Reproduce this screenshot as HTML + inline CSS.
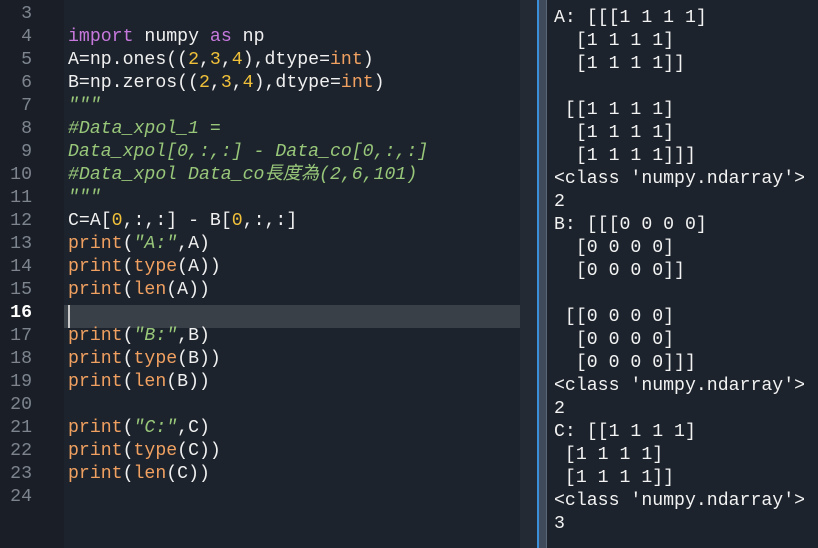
<!DOCTYPE html>
<html><head><meta charset="utf-8"><style>
html,body{margin:0;padding:0;width:818px;height:548px;overflow:hidden;background:#1c232c;}
.mono{font-family:"Liberation Mono","Noto Sans CJK TC",monospace;font-size:18.2px;line-height:23px;}
.mono div{white-space:pre;height:23px;}
#gut{position:absolute;left:0;top:0;width:64px;height:548px;background:#1a1f27;}
#gut div{text-align:right;width:32px;color:#7d848e;}
#code{position:absolute;left:64px;top:0;width:456px;height:548px;background:#1c232c;}
#code div{padding-left:4px;color:#f0f0f0;}
#hl{position:absolute;left:64px;top:305px;width:456px;height:23px;background:#3a4048;}
#cur{position:absolute;left:68px;top:305px;width:2px;height:23px;background:#c8c8c8;}
#sep1{position:absolute;left:520px;top:0;width:17px;height:548px;background:#232a33;}
#sep2{position:absolute;left:537px;top:0;width:2px;height:548px;background:#3a8fd8;}
#sep3{position:absolute;left:539px;top:0;width:8px;height:548px;background:#3f4b5b;}
#sep4{position:absolute;left:546px;top:0;width:1px;height:548px;background:#5a6777;}
#out{position:absolute;left:554px;top:7px;color:#f2f2f2;white-space:pre;}
.k{color:#c678dd}.n{color:#f0c03a}#code .s,.s{color:#98c77a;font-style:italic}.o{color:#f0a060}
</style></head><body>
<div id="gut" class="mono" style="padding-top:3px;box-sizing:border-box"><div>3</div><div>4</div><div>5</div><div>6</div><div>7</div><div>8</div><div>9</div><div>10</div><div>11</div><div>12</div><div>13</div><div>14</div><div>15</div><div style="color:#fff;font-weight:bold">16</div><div>17</div><div>18</div><div>19</div><div>20</div><div>21</div><div>22</div><div>23</div><div>24</div></div>
<div id="hl"></div><div id="cur"></div>
<div id="code" class="mono" style="padding-top:3px;box-sizing:border-box;background:transparent"><div> </div><div><span class="k">import</span> numpy <span class="k">as</span> np</div><div>A=np.ones((<span class="n">2</span>,<span class="n">3</span>,<span class="n">4</span>),dtype=<span class="o">int</span>)</div><div>B=np.zeros((<span class="n">2</span>,<span class="n">3</span>,<span class="n">4</span>),dtype=<span class="o">int</span>)</div><div class="s">"""</div><div class="s">#Data_xpol_1 =</div><div class="s">Data_xpol[0,:,:] - Data_co[0,:,:]</div><div class="s">#Data_xpol Data_co長度為(2,6,101)</div><div class="s">"""</div><div>C=A[<span class="n">0</span>,:,:] - B[<span class="n">0</span>,:,:]</div><div><span class="o">print</span>(<span class="s">"A:"</span>,A)</div><div><span class="o">print</span>(<span class="o">type</span>(A))</div><div><span class="o">print</span>(<span class="o">len</span>(A))</div><div> </div><div><span class="o">print</span>(<span class="s">"B:"</span>,B)</div><div><span class="o">print</span>(<span class="o">type</span>(B))</div><div><span class="o">print</span>(<span class="o">len</span>(B))</div><div> </div><div><span class="o">print</span>(<span class="s">"C:"</span>,C)</div><div><span class="o">print</span>(<span class="o">type</span>(C))</div><div><span class="o">print</span>(<span class="o">len</span>(C))</div></div>
<div id="sep1"></div><div id="sep2"></div><div id="sep3"></div><div id="sep4"></div>
<div id="out" class="mono">A: [[[1 1 1 1]
  [1 1 1 1]
  [1 1 1 1]]

 [[1 1 1 1]
  [1 1 1 1]
  [1 1 1 1]]]
&lt;class 'numpy.ndarray'&gt;
2
B: [[[0 0 0 0]
  [0 0 0 0]
  [0 0 0 0]]

 [[0 0 0 0]
  [0 0 0 0]
  [0 0 0 0]]]
&lt;class 'numpy.ndarray'&gt;
2
C: [[1 1 1 1]
 [1 1 1 1]
 [1 1 1 1]]
&lt;class 'numpy.ndarray'&gt;
3</div>
</body></html>
